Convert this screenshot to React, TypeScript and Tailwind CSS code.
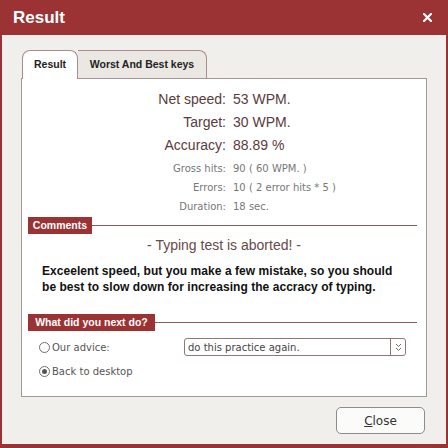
import React from "react";

const stats = [
  { label: "Net speed:", value: "53 WPM." },
  { label: "Target:", value: "30 WPM." },
  { label: "Accuracy:", value: "88.89 %" },
];

const details = [
  { label: "Gross hits:", value: "90 ( 60 WPM. )" },
  { label: "Errors:", value: "10 ( 2 error hits * 5 )" },
  { label: "Duration:", value: "18 sec." },
];

const SectionHeader = ({ title, width }: { title: string; width: string }) => (
  <div className="flex items-center h-[17px] ml-[6px] mr-[9px]">
    <div
      className={`${width} shrink-0 h-[17px] bg-[#9b3234] text-white font-bold text-[10.5px] flex items-center justify-center font-['Liberation_Sans',sans-serif]`}
    >
      {title}
    </div>
    <div className="flex-1 h-px bg-[#8d5a5a]" />
  </div>
);

const Radio = ({ checked }: { checked?: boolean }) => (
  <span className="shrink-0 w-[11px] h-[11px] rounded-full border border-[#6f6f6f] bg-white flex items-center justify-center">
    {checked && <span className="w-[5px] h-[5px] rounded-full bg-[#555]" />}
  </span>
);

export default function App() {
  return (
    <div className="w-[448px] h-[448px] flex flex-col bg-[#9b3234] font-['DejaVu_Sans',sans-serif]">
      {/* TITLE BAR */}
      <div className="h-[35px] flex items-center justify-between pl-[13px] pr-[16px]">
        <span className="text-white font-bold text-[17px] font-['Liberation_Sans',sans-serif]">
          Result
        </span>
        <svg width="9" height="9" viewBox="0 0 9 9">
          <path d="M1 1 L8 8 M8 1 L1 8" stroke="#fff" strokeWidth="2.2" strokeLinecap="square" />
        </svg>
      </div>

      {/* BODY */}
      <div className="flex-1 mx-[2px] mb-[4px] bg-[#f0efeb] flex flex-col pt-[15px] pl-[19px] pr-[19px]">
        {/* TABS */}
        <div className="flex h-[28px] items-end pl-[1px] font-['Liberation_Sans',sans-serif]">
          <div className="relative z-10 shrink-0 w-[56px] h-[29px] -mb-px bg-white border border-b-0 border-[#b08a8a] rounded-t-[8px] flex items-center justify-center text-[10.5px] font-bold text-[#222]">
            Result
          </div>
          <div className="shrink-0 w-[129px] h-[28px] bg-[#ebe8e3] border border-l-0 border-b-0 border-[#b08a8a] rounded-tr-[8px] flex items-center justify-center text-[10.5px] font-bold text-[#222]">
            Worst And Best keys
          </div>
        </div>

        {/* PANEL */}
        <div className="w-[406px] h-[319px] border border-[#a39797] bg-white flex flex-col pt-[9px]">
          <div className="flex flex-col font-['Liberation_Sans',sans-serif]">
            {stats.map((s) => (
              <div key={s.label} className="flex items-center h-[23px] text-[14px] text-[#5a3b3b]">
                <span className="shrink-0 w-[204px] text-right">{s.label}</span>
                <span className="pl-[7px]">{s.value}</span>
              </div>
            ))}
          </div>
          <div className="flex flex-col mt-[2px]">
            {details.map((d) => (
              <div key={d.label} className="flex items-center h-[19px] text-[10px] text-[#777]">
                <span className="shrink-0 w-[204px] text-right">{d.label}</span>
                <span className="pl-[7px]">{d.value}</span>
              </div>
            ))}
          </div>

          {/* COMMENTS */}
          <div className="mt-[1px]">
            <SectionHeader title="Comments" width="w-[64px]" />
          </div>
          <div className="mt-[2px] h-[18px] flex items-center justify-center text-[14px] text-[#6b4848] font-['Liberation_Sans',sans-serif]">
            - Typing test is aborted! -
          </div>
          <p className="mt-[9px] pl-[20px] text-[12px] leading-[16px] font-bold text-[#111] tracking-[0.05px] font-['Liberation_Sans',sans-serif]">
            Exceelent speed, but you make a few mistake, so you should
            <br />
            be best to slow down for increasing the accracy of typing.
          </p>

          {/* NEXT */}
          <div className="mt-[19px]">
            <SectionHeader title="What did you next do?" width="w-[127px]" />
          </div>
          <div className="mt-[7px] h-[18px] flex items-center pl-[17px]">
            <div className="shrink-0 w-[145px] flex items-center gap-[2px] text-[10px] text-[#555]">
              <Radio />
              <span>Our advice:</span>
            </div>
            <div className="shrink-0 w-[222px] h-[18px] border border-[#8f7777] rounded-[3px] flex bg-white">
              <span className="flex-1 flex items-center pl-[3px] text-[10px] text-[#444]">
                do this practice again.
              </span>
              <span className="shrink-0 w-[15px] border-l border-[#8f7777] flex items-center justify-center">
                <svg width="7" height="9" viewBox="0 0 7 9">
                  <path d="M1 1 L3.5 3.5 L6 1 M1 5 L3.5 7.5 L6 5" stroke="#7a6a6a" strokeWidth="1" fill="none" />
                </svg>
              </span>
            </div>
          </div>
          <div className="mt-[6px] h-[18px] flex items-center pl-[17px] gap-[2px] text-[10px] text-[#555]">
            <Radio checked />
            <span>Back to desktop</span>
          </div>
        </div>

        {/* CLOSE */}
        <div className="flex justify-end mt-[10px] pr-[2px]">
          <button className="w-[89px] h-[27px] rounded-[5px] border border-[#8c8c8c] bg-[#fbfbfa] text-[12px] text-[#333] flex items-center justify-center">
            <span>
              <span className="underline">C</span>lose
            </span>
          </button>
        </div>
      </div>
    </div>
  );
}
